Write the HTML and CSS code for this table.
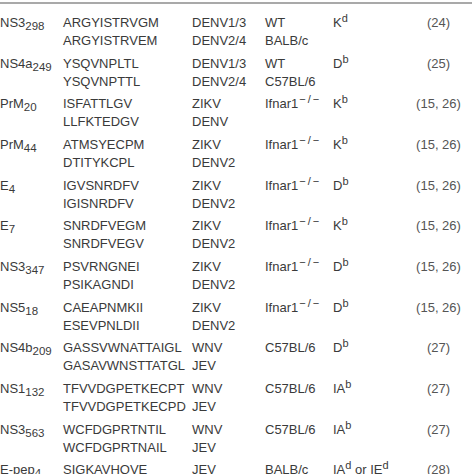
FILE: index.html
```html
<!DOCTYPE html>
<html lang="en">
<head>
<meta charset="utf-8">
<title>Epitopes</title>
<link rel="stylesheet" href="styles.css">
</head>
<body>
<div class="sheet">
<table class="epitopes">
<colgroup>
<col class="c-name"><col class="c-seq"><col class="c-virus"><col class="c-mouse"><col class="c-mhc"><col class="c-ref">
</colgroup>
<tbody>
<tr><td>NS3<sub class="lo">298</sub></td><td>ARGYISTRVGM<br>ARGYISTRVEM</td><td>DENV1/3<br>DENV2/4</td><td>WT<br>BALB/c</td><td>K<sup class="hi">d</sup></td><td class="ref">(24)</td></tr>
<tr><td>NS4a<sub class="lo">249</sub></td><td>YSQVNPLTL<br>YSQVNPTTL</td><td>DENV1/3<br>DENV2/4</td><td>WT<br>C57BL/6</td><td>D<sup class="hi">b</sup></td><td class="ref">(25)</td></tr>
<tr><td>PrM<sub class="lo">20</sub></td><td>ISFATTLGV<br>LLFKTEDGV</td><td>ZIKV<br>DENV</td><td>Ifnar1<sup class="hi ko">−/−</sup></td><td>K<sup class="hi">b</sup></td><td class="ref">(15, 26)</td></tr>
<tr><td>PrM<sub class="lo">44</sub></td><td>ATMSYECPM<br>DTITYKCPL</td><td>ZIKV<br>DENV2</td><td>Ifnar1<sup class="hi ko">−/−</sup></td><td>K<sup class="hi">b</sup></td><td class="ref">(15, 26)</td></tr>
<tr><td>E<sub class="lo">4</sub></td><td>IGVSNRDFV<br>IGISNRDFV</td><td>ZIKV<br>DENV2</td><td>Ifnar1<sup class="hi ko">−/−</sup></td><td>D<sup class="hi">b</sup></td><td class="ref">(15, 26)</td></tr>
<tr><td>E<sub class="lo">7</sub></td><td>SNRDFVEGM<br>SNRDFVEGV</td><td>ZIKV<br>DENV2</td><td>Ifnar1<sup class="hi ko">−/−</sup></td><td>K<sup class="hi">b</sup></td><td class="ref">(15, 26)</td></tr>
<tr><td>NS3<sub class="lo">347</sub></td><td>PSVRNGNEI<br>PSIKAGNDI</td><td>ZIKV<br>DENV2</td><td>Ifnar1<sup class="hi ko">−/−</sup></td><td>D<sup class="hi">b</sup></td><td class="ref">(15, 26)</td></tr>
<tr><td>NS5<sub class="lo">18</sub></td><td>CAEAPNMKII<br>ESEVPNLDII</td><td>ZIKV<br>DENV2</td><td>Ifnar1<sup class="hi ko">−/−</sup></td><td>D<sup class="hi">b</sup></td><td class="ref">(15, 26)</td></tr>
<tr><td>NS4b<sub class="lo">209</sub></td><td>GASSVWNATTAIGL<br>GASAVWNSTTATGL</td><td>WNV<br>JEV</td><td>C57BL/6</td><td>D<sup class="hi">b</sup></td><td class="ref">(27)</td></tr>
<tr><td>NS1<sub class="lo">132</sub></td><td>TFVVDGPETKECPT<br>TFVVDGPETKECPD</td><td>WNV<br>JEV</td><td>C57BL/6</td><td>IA<sup class="hi">b</sup></td><td class="ref">(27)</td></tr>
<tr><td>NS3<sub class="lo">563</sub></td><td>WCFDGPRTNTIL<br>WCFDGPRTNAIL</td><td>WNV<br>JEV</td><td>C57BL/6</td><td>IA<sup class="hi">b</sup></td><td class="ref">(27)</td></tr>
<tr><td>E-pep<sub class="lo">4</sub></td><td>SIGKAVHQVE</td><td>JEV</td><td>BALB/c</td><td>IA<sup class="hi">d</sup> or IE<sup class="hi">d</sup></td><td class="ref">(28)</td></tr>
</tbody>
</table>
</div>
</body>
</html>
```
FILE: styles.css
```css
html, body {
  margin: 0;
  padding: 0;
  background: #ffffff;
}
body {
  font-family: "Liberation Sans", Arial, Helvetica, sans-serif;
  font-size: 13px;
  color: #3a3a3a;
  overflow: hidden;
}
.sheet {
  width: 472px;
  margin-top: 2px;
  border-top: 2px solid #a9a9a9;
  padding-top: 7.5px;
}
.epitopes {
  width: 472px;
  border-collapse: collapse;
  table-layout: fixed;
}
.c-name { width: 63px; }
.c-seq { width: 129px; }
.c-virus { width: 73px; }
.c-mouse { width: 68px; }
.c-mhc { width: 72px; }
.c-ref { width: 67px; }
.epitopes td {
  padding: 2.35px 0;
  line-height: 18px;
  vertical-align: top;
  white-space: nowrap;
  text-align: left;
}
.epitopes td.ref {
  text-align: center;
  color: #555;
}
.lo {
  font-size: 11.5px;
  line-height: 0;
  vertical-align: -3px;
}
.hi {
  font-size: 11px;
  line-height: 0;
  vertical-align: 5px;
}
.ko {
  letter-spacing: 2px;
  padding-left: 1px;
}
```
